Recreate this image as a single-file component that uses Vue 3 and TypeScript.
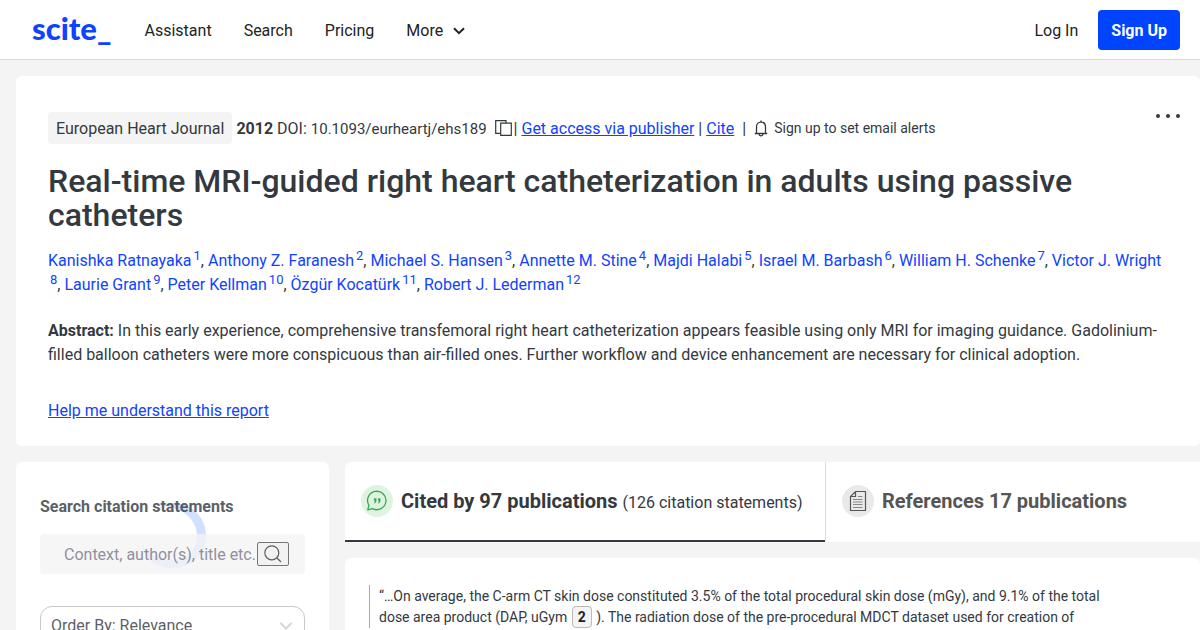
<script setup lang="ts">
import { ref } from 'vue'

interface Author {
  name: string
  mark: number
}

const navLinks: string[] = ['Assistant', 'Search', 'Pricing']

const authors: Author[] = [
  'Kanishka Ratnayaka',
  'Anthony Z. Faranesh',
  'Michael S. Hansen',
  'Annette M. Stine',
  'Majdi Halabi',
  'Israel M. Barbash',
  'William H. Schenke',
  'Victor J. Wright',
  'Laurie Grant',
  'Peter Kellman',
  'Özgür Kocatürk',
  'Robert J. Lederman',
].map((name, i) => ({ name, mark: i + 1 }))

const query = ref('')
const order = ref('Relevance')
</script>

<template>
  <header class="topbar">
    <a class="logo" href="#">scite_</a>
    <nav class="nav">
      <a v-for="link in navLinks" :key="link" href="#">{{ link }}</a>
      <button type="button" class="more">
        More
        <svg width="12" height="8" viewBox="0 0 12 8" aria-hidden="true">
          <path d="M1 1.2 6 6.2 11 1.2" fill="none" stroke="currentColor" stroke-width="2" />
        </svg>
      </button>
    </nav>
    <div class="account">
      <a class="login" href="#">Log In</a>
      <a class="signup" href="#">Sign Up</a>
    </div>
  </header>

  <main class="page">
    <section class="card report">
      <button type="button" class="dots" aria-label="More options">
        <svg width="24" height="4" viewBox="0 0 24 4" aria-hidden="true">
          <circle cx="2" cy="2" r="2" /><circle cx="12" cy="2" r="2" /><circle cx="22" cy="2" r="2" />
        </svg>
      </button>
      <div class="meta">
        <span class="journal">European Heart Journal</span>
        <span class="meta-text"><strong>2012</strong> DOI: <span class="doi">10.1093/eurheartj/ehs189</span></span>
        <button type="button" class="copy" aria-label="Copy DOI">
          <svg width="18" height="16" viewBox="0 0 18 16" aria-hidden="true">
            <path d="M11 2.5V.7H.7v12.6H5M5.7 3.2h10.6v12.1H5.7z" fill="none" stroke="currentColor" stroke-width="1.2" />
          </svg>
        </button>
        <span class="meta-text bar">|</span>
        <a class="meta-text line" href="#">Get access via publisher</a>
        <span class="meta-text">|</span>
        <a class="meta-text line" href="#">Cite</a>
        <span class="meta-text gap">|</span>
        <button type="button" class="alerts">
          <svg width="14" height="17" viewBox="0 0 14 17" aria-hidden="true">
            <path d="M.7 13.500h12.600M2.500 13.300V7c0-2.800 1.800-4.800 4.500-4.800S11.500 4.200 11.500 7v6.300M7 2.200V.4M5 14.200c.3 1.100 1 1.700 2 1.700s1.700-.6 2-1.700" fill="none" stroke="currentColor" stroke-width="1.300" />
          </svg>
          Sign up to set email alerts
        </button>
      </div>
      <h1>Real-time MRI-guided right heart catheterization in adults using passive catheters</h1>
      <p class="authors">
        <template v-for="(a, i) in authors" :key="a.mark"><a href="#">{{ a.name }}</a><span class="mark"><a href="#"><sup>{{ a.mark }}</sup></a><template v-if="i < authors.length - 1">,</template></span>{{ ' ' }}</template>
      </p>
      <p class="abstract">
        <strong>Abstract:</strong> In this early experience, comprehensive transfemoral right heart
        catheterization appears feasible using only MRI for imaging guidance. Gadolinium-filled balloon
        catheters were more conspicuous than air-filled ones. Further workflow and device enhancement are
        necessary for clinical adoption.
      </p>
      <a class="line" href="#">Help me understand this report</a>
    </section>

    <div class="columns">
      <aside class="card filters">
        <svg class="spinner" width="66" height="66" viewBox="0 0 66 66" aria-hidden="true">
          <path d="M20 3C44-5 66 11 66 34 66 54 50 66 32 66 15 66 5 57 2 42c5 9 14 16 27 16 17 0 28-9 28-24C57 17 42 5 20 3Z" fill="#d0e0ff" />
        </svg>
        <form class="filter-form" @submit.prevent>
          <label class="heading" for="q">Search citation statements</label>
          <div class="search">
            <input id="q" v-model="query" type="text" placeholder="Context, author(s), title etc." />
            <button type="submit" aria-label="Search">
              <svg width="18" height="18" viewBox="0 0 18 18" aria-hidden="true">
                <path d="M13 13l4 4" stroke="currentColor" stroke-width="1.2" />
                <circle cx="7.800" cy="7.800" r="7" fill="none" stroke="currentColor" stroke-width="1.200" />
              </svg>
            </button>
          </div>
          <div class="order">
            <select v-model="order" aria-label="Order by">
              <option value="Relevance">Order By: Relevance</option>
              <option value="Recent">Order By: Most Recent</option>
            </select>
            <svg width="14" height="8" viewBox="0 0 14 8" aria-hidden="true">
              <path d="M2 1.500 7 6.500l5-5" fill="none" stroke="#ccc" stroke-width="2" stroke-linecap="round" />
            </svg>
          </div>
        </form>
      </aside>

      <div class="results">
        <div class="tabs" role="tablist">
          <button type="button" role="tab" aria-selected="true" class="tab active">
            <svg width="32" height="32" viewBox="0 0 32 32" aria-hidden="true">
              <circle cx="16" cy="16" r="16" fill="#def4e0" />
              <path d="M6.800 24.800l1.100-4.600A9.200 9.200 0 1 1 11.500 23.600z" fill="none" stroke="#3aa655" stroke-width="1.300" stroke-linejoin="round" />
              <path d="M13.200 13.500h2v2.200c0 1.300-.7 2.200-1.900 2.600l.9-2.600h-1zM17.200 13.500h2v2.200c0 1.300-.7 2.200-1.900 2.600l.9-2.600h-1z" fill="#3aa655" stroke="#3aa655" stroke-width=".4" />
            </svg>
            <span class="title">Cited by 97 publications <small>(126 citation statements)</small></span>
          </button>
          <button type="button" role="tab" aria-selected="false" class="tab">
            <svg width="32" height="32" viewBox="0 0 32 32" aria-hidden="true">
              <circle cx="16" cy="16" r="16" fill="#e9e9e9" />
              <path d="M13.500 6.500h10v19h-15v-14zM13.500 6.500v5h-5" fill="none" stroke="#555" stroke-width="1.200" />
              <path d="M16 11.500h4.500M11 14.500h9.500M11 17h9.500M11 19.500h9.500M11 22.500h9.500" stroke="#888" stroke-width="1.200" />
            </svg>
            <span class="title">References 17 publications</span>
          </button>
        </div>
        <article class="card statement">
          <blockquote>
            “…On average, the C-arm CT skin dose constituted 3.5% of the total procedural skin dose (mGy), and
            9.1% of the total dose area product (DAP, uGym <a class="ref" href="#">2</a> ). The radiation dose
            of the pre-procedural MDCT dataset used for creation of
          </blockquote>
        </article>
      </div>
    </div>
  </main>
</template>

<style>
body {
  background: #f4f4f4;
}
</style>

<style scoped>
.topbar,
.page {
  font-family: Roboto, "Liberation Sans", Arial, sans-serif;
  font-size: 16px;
  line-height: 24px;
  color: #33393f;
}
.topbar *,
.page * {
  box-sizing: border-box;
}
button,
input,
select {
  font: inherit;
  color: inherit;
  border: 0;
  padding: 0;
  background: none;
}
button {
  cursor: pointer;
}
svg {
  flex: none;
  display: block;
}
a {
  color: #0f43ff;
  text-decoration: none;
}
.line {
  text-decoration: underline;
}
.topbar {
  display: flex;
  align-items: center;
  height: 59px;
  padding: 0 20px 0 32px;
  background: #fff;
  border-bottom: 1px solid #d8d8d8;
}
.logo {
  padding-bottom: 4px;
  font-family: Lato, sans-serif;
  font-weight: 900;
  font-size: 31px;
}
.nav {
  display: flex;
  gap: 32px;
  margin-left: 33px;
  padding-top: 2px;
}
.nav a,
.nav button,
.account a {
  color: #222;
}
.more {
  display: flex;
  align-items: center;
  gap: 10px;
}
.account {
  display: flex;
  align-items: center;
  gap: 20px;
  margin-left: auto;
}
.login {
  padding-top: 2px;
}
.account .signup {
  padding: 9px 13px 7px;
  border-radius: 4px;
  background: #0044ff;
  color: #fff;
  font-weight: 700;
}
.page {
  padding: 16px 0 0 16px;
}
.card {
  background: #fff;
  border-radius: 6px;
}
.report {
  position: relative;
  padding: 36px 32px 23px;
}
.dots {
  position: absolute;
  top: 38px;
  right: 20px;
  fill: currentColor;
}
.meta {
  display: flex;
  align-items: center;
  gap: 4px;
}
.meta-text {
  padding-top: 2px;
}
.journal {
  padding: 5px 8px 3px;
  border-radius: 4px;
  background: #f4f4f4;
}
.doi {
  font-size: 15px;
}
.copy {
  margin-left: 4px;
}
.bar {
  margin-left: -3px;
}
.gap {
  margin: 0 4px;
}
.alerts {
  display: flex;
  align-items: center;
  gap: 6px;
  font-size: 14px;
}
h1 {
  margin: 20px 0 17px;
  font-size: 32px;
  line-height: 34px;
  font-weight: 500;
}
.authors,
.abstract {
  margin: 0;
}
.authors {
  margin-bottom: 22px;
}
.abstract {
  margin-bottom: 32px;
}
.mark {
  display: inline-block;
}
sup {
  margin-left: 2px;
  font-size: 13px;
  line-height: 12px;
  vertical-align: 6px;
}
.columns {
  display: grid;
  grid-template-columns: 313px minmax(0, 1fr);
  gap: 16px;
  margin-top: 16px;
}
.filters {
  position: relative;
  padding: 33px 24px;
}
.spinner {
  position: absolute;
  top: 40px;
  left: 124px;
}
.filter-form {
  position: relative;
  opacity: 0.8;
}
.heading {
  display: block;
  font-weight: 700;
}
.search {
  display: flex;
  align-items: center;
  height: 40px;
  margin: 15px 0 32px;
  padding: 0 16px 0 24px;
  border-radius: 4px;
  background: #f4f4f4;
}
.search input {
  flex: 1;
  min-width: 0;
  padding-top: 2px;
}
.search input::placeholder {
  color: #757589;
  opacity: 1;
}
.search button {
  padding: 2px 6px;
  border: 1px solid #555;
  border-radius: 2px;
  background: #efefef;
}
.order {
  position: relative;
  height: 40px;
  border: 1px solid #bbb;
  border-radius: 12px;
}
.order select {
  width: 100%;
  height: 38px;
  padding: 0 10px;
  appearance: none;
}
.order svg {
  position: absolute;
  right: 11px;
  top: 15px;
}
.tabs {
  display: grid;
  grid-template-columns: 480px minmax(0, 1fr);
}
.tab {
  display: flex;
  align-items: center;
  gap: 8px;
  height: 80px;
  padding: 0 16px;
  background: #fff;
  border-left: 1px solid #ddd;
  border-bottom: 2px solid #fff;
  color: #555;
}
.tab.active {
  border-left: 0;
  border-bottom-color: #33393f;
  border-top-left-radius: 6px;
  color: #33393f;
}
.title {
  font-size: 20px;
  font-weight: 700;
}
.title small {
  font-size: 16px;
  line-height: 16px;
  font-weight: 400;
}
.statement {
  margin-top: 16px;
  padding: 27px 24px;
}
blockquote {
  max-width: 750px;
  margin: 0;
  padding: 1px 0 0 9px;
  border-left: 1px solid #aaa;
  font-size: 14px;
  line-height: 21px;
}
.ref {
  margin: 0 1px;
  padding: 2px 5px;
  border: 1px solid #bbb;
  border-radius: 4px;
  background: #f4f4f4;
  color: #222;
  font-weight: 700;
}
</style>
